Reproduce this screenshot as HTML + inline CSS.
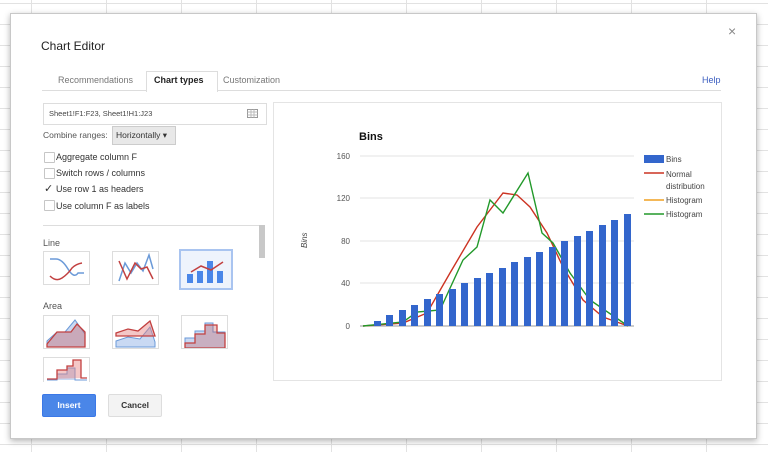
<!DOCTYPE html>
<html><head><style>
body{margin:0;width:768px;height:452px;overflow:hidden;background:#fff;font-family:"Liberation Sans",Arial,sans-serif;position:relative}
.grid{position:absolute;inset:0;background-image:linear-gradient(#e2e2e2 1px,transparent 1px),linear-gradient(90deg,#e2e2e2 1px,transparent 1px);background-size:75px 21px,75px 21px;background-position:0 3px,31px 0}
.dlg{position:absolute;left:10px;top:13px;width:745px;height:424px;background:#fff;border:1px solid #c8c8c8;box-shadow:0 2px 6px rgba(0,0,0,.3)}
.a{position:absolute;font-size:9px;color:#333;white-space:nowrap}
.cb{position:absolute;width:9px;height:9px;border:1px solid #c6c6c6;border-radius:1px;background:#fff}
.ic{position:absolute;width:45px;height:32px;border:1px solid #ddd;background:#fff}
</style></head><body>
<div class="grid"></div>
<div class="dlg">
<div class="a" style="left:30px;top:25px;font-size:12px;color:#222">Chart Editor</div>
<div class="a" style="left:717px;top:9px;font-size:14px;color:#888">×</div>
<div style="position:absolute;left:31px;top:76px;width:679px;height:1px;background:#ddd"></div>
<div class="a" style="left:47px;top:61px;color:#777">Recommendations</div>
<div style="position:absolute;left:135px;top:57px;width:70px;height:20px;border:1px solid #ddd;border-bottom:none;background:#fff"></div>
<div class="a" style="left:143px;top:61px;font-weight:bold;color:#222">Chart types</div>
<div class="a" style="left:212px;top:61px;color:#777">Customization</div>
<div class="a" style="left:691px;top:61px;color:#3b5ec0">Help</div>
<div style="position:absolute;left:32px;top:89px;width:222px;height:20px;border:1px solid #ddd"></div>
<div class="a" style="left:38px;top:95px;font-size:7.5px;color:#444">Sheet1!F1:F23, Sheet1!H1:J23</div>
<svg style="position:absolute;left:236px;top:95px" width="11" height="9"><rect x=".5" y=".5" width="10" height="8" fill="none" stroke="#999"/><path d="M.5 3h10M.5 6h10M4 .5v8M7 .5v8" stroke="#bbb"/></svg>
<div class="a" style="left:32px;top:116px;font-size:8.5px;color:#555">Combine ranges:</div>
<div style="position:absolute;left:101px;top:112px;width:62px;height:17px;background:#e8e8e8;border:1px solid #ccc"></div>
<div class="a" style="left:105px;top:116px;font-size:8.5px">Horizontally ▾</div>
<div class="cb" style="left:33px;top:138px"></div><div class="a" style="left:45px;top:138px">Aggregate column F</div>
<div class="cb" style="left:33px;top:154px"></div><div class="a" style="left:45px;top:154px">Switch rows / columns</div>
<div class="a" style="left:33px;top:168px;font-size:11px">✓</div><div class="a" style="left:45px;top:170px">Use row 1 as headers</div>
<div class="cb" style="left:33px;top:186px"></div><div class="a" style="left:45px;top:187px">Use column F as labels</div>
<div style="position:absolute;left:32px;top:211px;width:222px;height:1px;background:#ddd"></div>
<div style="position:absolute;left:248px;top:211px;width:6px;height:33px;background:#c8c8c8"></div>
<div class="a" style="left:32px;top:224px;color:#555">Line</div>
<div class="ic" style="left:32px;top:237px"><svg width="45" height="32"><path d="M6 7h6q6 0 12 10t10 4h6" fill="none" stroke="#6b9ad8" stroke-width="1.5"/><path d="M6 24q6 6 12 2t10-10q4-4 10-5" fill="none" stroke="#c24040" stroke-width="1.5"/></svg></div>
<div class="ic" style="left:101px;top:237px"><svg width="45" height="32"><path d="M6 29l6-18 6 10 6-10 6 8 6-16 4 14" fill="none" stroke="#6b9ad8" stroke-width="1.5"/><path d="M6 9l8 18 8-16 6 6 6-2 6 12" fill="none" stroke="#c24040" stroke-width="1.5"/></svg></div>
<div class="ic" style="left:168px;top:235px;width:50px;height:37px;border:2px solid #a9c4f0;background:#eef3fc"><svg width="50" height="37"><rect x="6" y="23" width="6" height="9" fill="#4a86e8"/><rect x="16" y="20" width="6" height="12" fill="#4a86e8"/><rect x="26" y="10" width="6" height="22" fill="#4a86e8"/><rect x="36" y="20" width="6" height="12" fill="#4a86e8"/><path d="M10 21l10-6 10 4 12-8" fill="none" stroke="#c24040" stroke-width="1.5"/></svg></div>
<div class="a" style="left:32px;top:287px;color:#555">Area</div>
<div class="ic" style="left:32px;top:301px"><svg width="45" height="32"><path d="M3 25l10-9 8 0 10-12 10 14v13H3z" fill="#c9d9f3" stroke="#6b9ad8"/><path d="M3 28l10-12 14 0 6-8 8 8v15H3z" fill="rgba(200,80,80,.35)" stroke="#c24040" stroke-width="1.3"/></svg></div>
<div class="ic" style="left:101px;top:301px"><svg width="45" height="32"><path d="M3 25l12-4 12 2 10-12 5 15v5H3z" fill="#c9d9f3" stroke="#6b9ad8"/><path d="M3 17l12-4 10 2 12-10 5 15H3z" fill="rgba(230,130,130,.45)" stroke="#c24040" stroke-width="1.3"/></svg></div>
<div class="ic" style="left:170px;top:301px"><svg width="45" height="32"><path d="M3 22h10v-7h10V7h8v9h12v16H3z" fill="#c9d9f3" stroke="#6b9ad8"/><path d="M3 27h10v-9h10v-9h12v8h8v15H3z" fill="rgba(200,80,80,.3)" stroke="#c24040" stroke-width="1.3"/></svg></div>
<div class="ic" style="left:32px;top:343px;height:24px;border-bottom:none"><svg width="45" height="24"><path d="M3 22h10v-6h10v-6h8v12h12" fill="#c9d9f3" stroke="#6b9ad8"/><path d="M3 21h10V12h10V8h6V2h8v18h6" fill="rgba(230,130,130,.45)" stroke="#c24040" stroke-width="1.3"/></svg></div>
<div style="position:absolute;left:31px;top:380px;width:52px;height:21px;background:#4a86e8;border:1px solid #3b78e7;border-radius:2px;color:#fff;font-size:8.5px;font-weight:bold;text-align:center;line-height:21px">Insert</div>
<div style="position:absolute;left:97px;top:380px;width:52px;height:21px;background:#f3f3f3;border:1px solid #ddd;border-radius:2px;color:#333;font-size:8.5px;font-weight:bold;text-align:center;line-height:21px">Cancel</div>
<div style="position:absolute;left:262px;top:88px;width:447px;height:277px;border:1px solid #e4e4e4"></div>
</div>
<svg style="position:absolute;left:0;top:0" width="768" height="452" font-family="Liberation Sans,Arial,sans-serif">
<text x="359" y="140" font-size="11" font-weight="bold" fill="#111">Bins</text>
<g stroke="#e3e3e3"><line x1="360" y1="156" x2="634" y2="156"/><line x1="360" y1="198" x2="634" y2="198"/><line x1="360" y1="241" x2="634" y2="241"/><line x1="360" y1="283" x2="634" y2="283"/></g>
<line x1="360" y1="326" x2="634" y2="326" stroke="#999"/>
<g font-size="8" fill="#555" text-anchor="end"><text x="350" y="159">160</text><text x="350" y="201">120</text><text x="350" y="244">80</text><text x="350" y="286">40</text><text x="350" y="329">0</text></g>
<text x="0" y="0" font-size="8" fill="#444" font-style="italic" transform="translate(307,248) rotate(-90)">Bins</text>
<polyline fill="none" stroke="#cc3322" stroke-width="1.4" points="363,326 403,323 427,313 450,273 477,227 503,193 517,195 530,207 547,233 563,267 583,300 603,317 628,326"/>
<polyline fill="none" stroke="#22992a" stroke-width="1.4" points="363,326 403,322 417,312 440,310 463,260 477,247 490,200 503,213 528,173 542,233 553,243 570,273 590,300 628,326"/>
<rect x="644" y="155" width="20" height="8" fill="#3366cc"/><line x1="644" y1="173" x2="664" y2="173" stroke="#cc3322" stroke-width="1.5"/><line x1="644" y1="200" x2="664" y2="200" stroke="#f0a020" stroke-width="1.5"/><line x1="644" y1="214" x2="664" y2="214" stroke="#22992a" stroke-width="1.5"/>
<g font-size="8" fill="#444"><text x="666" y="162">Bins</text><text x="666" y="177">Normal</text><text x="666" y="189">distribution</text><text x="666" y="203">Histogram</text><text x="666" y="217">Histogram</text></g>
<g fill="#3366cc">
<rect x="374" y="321" width="7" height="5"/><rect x="386" y="315" width="7" height="11"/><rect x="399" y="310" width="7" height="16"/><rect x="411" y="305" width="7" height="21"/><rect x="424" y="299" width="7" height="27"/><rect x="436" y="294" width="7" height="32"/><rect x="449" y="289" width="7" height="37"/><rect x="461" y="283" width="7" height="43"/><rect x="474" y="278" width="7" height="48"/><rect x="486" y="273" width="7" height="53"/><rect x="499" y="268" width="7" height="58"/><rect x="511" y="262" width="7" height="64"/><rect x="524" y="257" width="7" height="69"/><rect x="536" y="252" width="7" height="74"/><rect x="549" y="247" width="7" height="79"/><rect x="561" y="241" width="7" height="85"/><rect x="574" y="236" width="7" height="90"/><rect x="586" y="231" width="7" height="95"/><rect x="599" y="225" width="7" height="101"/><rect x="611" y="220" width="7" height="106"/><rect x="624" y="214" width="7" height="112"/>
</g>
</svg>
</body></html>
